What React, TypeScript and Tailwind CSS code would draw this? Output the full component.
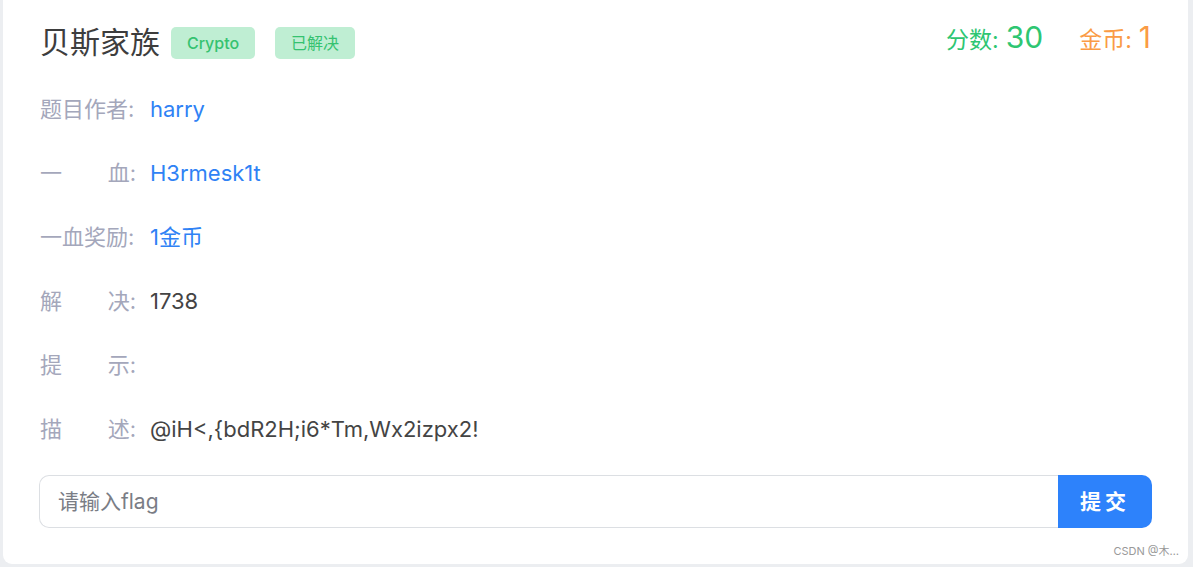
import React from "react";

const font = { fontFamily: 'Inter, "Noto Sans CJK SC", sans-serif' };

function Row({ label, value, valueClass }: { label: React.ReactNode; value?: string; valueClass?: string }) {
  return (
    <div className="flex h-[64px] items-center">
      <div className="flex w-[96px] justify-between text-[22px] text-[#a4a7bb]">{label}</div>
      <div className={`ml-[14px] text-[22px] ${valueClass ?? ""}`}>{value}</div>
    </div>
  );
}

export default function App() {
  return (
    <div className="h-[567px] w-[1193px] bg-[#eceef1] pl-[3px] pr-[5px] pb-[3px]" style={font}>
      <div className="relative flex h-full flex-col rounded-b-[9px] bg-white px-[36px] pt-[23px]">
        <div className="flex h-[40px] items-center">
          <div className="-mt-[3px] ml-[1px] text-[30px] leading-none text-[#3d3d3d]">贝斯家族</div>
          <span className="ml-[11px] flex h-[32px] w-[84px] items-center justify-center rounded-[5px] bg-[#bfeed3] text-[16px] font-medium text-[#35c270]">Crypto</span>
          <span className="ml-[20px] flex h-[32px] w-[80px] items-center justify-center rounded-[5px] bg-[#bfeed3] text-[16px] text-[#35c270]">已解决</span>
          <div className="-mt-[7px] ml-auto flex items-baseline pr-[1px]">
            <span className="text-[23px] text-[#2ec672]">分数:</span>
            <span className="ml-[7px] text-[30px] leading-none text-[#2ec672]">30</span>
            <span className="ml-[36px] text-[23px] text-[#fa9b45]">金币:</span>
            <span className="ml-[7px] text-[30px] leading-none text-[#fa9b45]">1</span>
          </div>
        </div>
        <div className="mt-[14px] flex flex-col pl-[1px]">
          <Row label={<span>题目作者:</span>} value="harry" valueClass="text-[#2f82f5]" />
          <Row label={<><span>一</span><span>血:</span></>} value="H3rmesk1t" valueClass="text-[#2f82f5]" />
          <Row label={<span>一血奖励:</span>} value="1金币" valueClass="text-[#2f82f5]" />
          <Row label={<><span>解</span><span>决:</span></>} value="1738" valueClass="text-[#444444]" />
          <Row label={<><span>提</span><span>示:</span></>} value="" />
          <Row label={<><span>描</span><span>述:</span></>} value="@iH<,{bdR2H;i6*Tm,Wx2izpx2!" valueClass="text-[#444444]" />
        </div>
        <div className="mt-[14px] flex h-[53px]">
          <div className="flex flex-1 items-center rounded-l-[10px] border border-[#dcdfe3] border-r-0 pl-[18px] text-[21px] text-[#7a7d85]">
            请输入flag
          </div>
          <div className="flex w-[94px] items-center justify-center rounded-r-[10px] bg-[#2d82fb] text-[21px] font-bold tracking-[4px] text-white">
            提交
          </div>
        </div>
        <div className="absolute bottom-[5px] right-[9px] text-[11px] text-[#999999]">CSDN @木…</div>
      </div>
    </div>
  );
}
